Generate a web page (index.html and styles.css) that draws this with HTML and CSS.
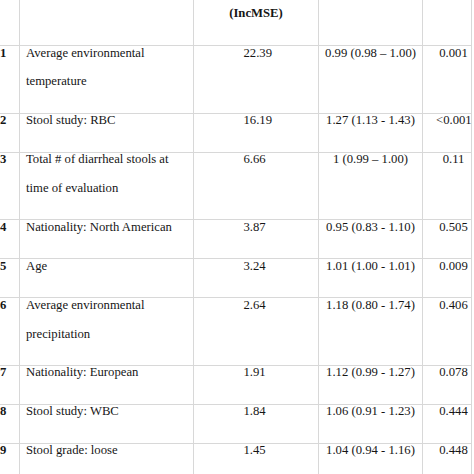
FILE: index.html
```html
<!DOCTYPE html>
<html>
<head>
<meta charset="utf-8">
<link rel="stylesheet" href="styles.css">
</head>
<body>
<div class="table">
  <div class="cell head"></div>
  <div class="cell head"></div>
  <div class="cell head c3h"><div class="t">(IncMSE)</div></div>
  <div class="cell head"></div>
  <div class="cell head"></div>

  <div class="cell rank"><div class="t">1</div></div>
  <div class="cell name"><div class="t">Average environmental temperature</div></div>
  <div class="cell imp"><div class="t">22.39</div></div>
  <div class="cell ci"><div class="t">0.99 (0.98 – 1.00)</div></div>
  <div class="cell p"><div class="t">0.001</div></div>

  <div class="cell rank"><div class="t">2</div></div>
  <div class="cell name"><div class="t">Stool study: RBC</div></div>
  <div class="cell imp"><div class="t">16.19</div></div>
  <div class="cell ci"><div class="t">1.27 (1.13 - 1.43)</div></div>
  <div class="cell p"><div class="t">&lt;0.001</div></div>

  <div class="cell rank"><div class="t">3</div></div>
  <div class="cell name"><div class="t">Total # of diarrheal stools at time of evaluation</div></div>
  <div class="cell imp"><div class="t">6.66</div></div>
  <div class="cell ci"><div class="t">1 (0.99 – 1.00)</div></div>
  <div class="cell p"><div class="t">0.11</div></div>

  <div class="cell rank"><div class="t">4</div></div>
  <div class="cell name"><div class="t">Nationality: North American</div></div>
  <div class="cell imp"><div class="t">3.87</div></div>
  <div class="cell ci"><div class="t">0.95 (0.83 - 1.10)</div></div>
  <div class="cell p"><div class="t">0.505</div></div>

  <div class="cell rank"><div class="t">5</div></div>
  <div class="cell name"><div class="t">Age</div></div>
  <div class="cell imp"><div class="t">3.24</div></div>
  <div class="cell ci"><div class="t">1.01 (1.00 - 1.01)</div></div>
  <div class="cell p"><div class="t">0.009</div></div>

  <div class="cell rank"><div class="t">6</div></div>
  <div class="cell name"><div class="t">Average environmental precipitation</div></div>
  <div class="cell imp"><div class="t">2.64</div></div>
  <div class="cell ci"><div class="t">1.18 (0.80 - 1.74)</div></div>
  <div class="cell p"><div class="t">0.406</div></div>

  <div class="cell rank"><div class="t">7</div></div>
  <div class="cell name"><div class="t">Nationality: European</div></div>
  <div class="cell imp"><div class="t">1.91</div></div>
  <div class="cell ci"><div class="t">1.12 (0.99 - 1.27)</div></div>
  <div class="cell p"><div class="t">0.078</div></div>

  <div class="cell rank"><div class="t">8</div></div>
  <div class="cell name"><div class="t">Stool study: WBC</div></div>
  <div class="cell imp"><div class="t">1.84</div></div>
  <div class="cell ci"><div class="t">1.06 (0.91 - 1.23)</div></div>
  <div class="cell p"><div class="t">0.444</div></div>

  <div class="cell rank"><div class="t">9</div></div>
  <div class="cell name"><div class="t">Stool grade: loose</div></div>
  <div class="cell imp"><div class="t">1.45</div></div>
  <div class="cell ci"><div class="t">1.04 (0.94 - 1.16)</div></div>
  <div class="cell p"><div class="t">0.448</div></div>
</div>
</body>
</html>
```
FILE: styles.css
```css
html, body {
  margin: 0;
  padding: 0;
  background: #ffffff;
  overflow: hidden;
}
body {
  width: 474px;
  height: 474px;
  font-family: "Liberation Serif", "Times New Roman", serif;
  font-size: 12.7px;
  color: #161616;
}
.table {
  display: grid;
  grid-template-columns: 29px 173px 124px 103px 48px;
  column-gap: 1px;
  row-gap: 1px;
  background: #d8d8d8;
  padding-right: 1px;
  margin-left: -10px;
  width: max-content;
}
.cell {
  background: #ffffff;
  padding: 0 6px 16.5px 6px;
  line-height: 28.8px;
}
.cell .t {
  margin-top: -7.4px;
}
.head {
  height: 45px;
  padding: 0;
  box-sizing: border-box;
}
.c3h {
  text-align: center;
  font-weight: bold;
}
.c3h .t {
  margin-top: -1.4px;
}
.rank {
  padding-left: 10px;
  padding-right: 0;
  font-weight: bold;
}
.imp {
  padding-left: 49.5px;
}
.ci {
  text-align: center;
  padding-left: 2px;
  padding-right: 2px;
  white-space: nowrap;
}
.p {
  text-align: center;
  padding-left: 13px;
  padding-right: 0;
  white-space: nowrap;
}
```
